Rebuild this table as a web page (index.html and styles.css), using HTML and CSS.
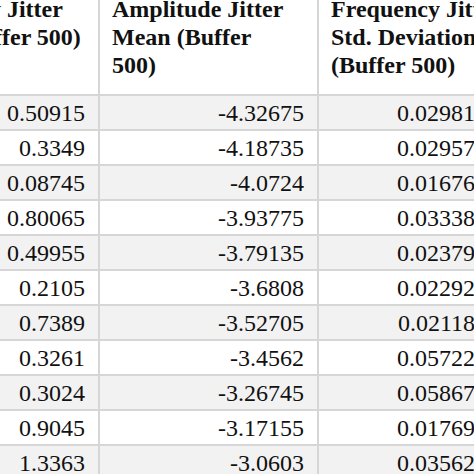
FILE: index.html
```html
<!DOCTYPE html>
<html lang="en">
<head>
<meta charset="utf-8">
<title>Jitter table</title>
<link rel="stylesheet" href="styles.css">
</head>
<body class="page">
<main class="viewport">
<table class="data">
<colgroup>
<col class="c1"><col class="c2"><col class="c3">
</colgroup>
<thead>
<tr class="head">
<th class="hcell">Frequency Jitter<br>Mean (Buffer 500)</th>
<th class="hcell">Amplitude Jitter<br>Mean (Buffer<br>500)</th>
<th class="hcell">Frequency Jitter<br>Std. Deviation<br>(Buffer 500)</th>
</tr>
</thead>
<tbody>
<tr class="row"><td class="num">0.50915</td><td class="num">-4.32675</td><td class="num">0.0298135</td></tr>
<tr class="row"><td class="num">0.3349</td><td class="num">-4.18735</td><td class="num">0.0295744</td></tr>
<tr class="row"><td class="num">0.08745</td><td class="num">-4.0724</td><td class="num">0.0167629</td></tr>
<tr class="row"><td class="num">0.80065</td><td class="num">-3.93775</td><td class="num">0.0333853</td></tr>
<tr class="row"><td class="num">0.49955</td><td class="num">-3.79135</td><td class="num">0.0237961</td></tr>
<tr class="row"><td class="num">0.2105</td><td class="num">-3.6808</td><td class="num">0.0229227</td></tr>
<tr class="row"><td class="num">0.7389</td><td class="num">-3.52705</td><td class="num">0.0211836</td></tr>
<tr class="row"><td class="num">0.3261</td><td class="num">-3.4562</td><td class="num">0.0572218</td></tr>
<tr class="row"><td class="num">0.3024</td><td class="num">-3.26745</td><td class="num">0.0586742</td></tr>
<tr class="row"><td class="num">0.9045</td><td class="num">-3.17155</td><td class="num">0.0176935</td></tr>
<tr class="row"><td class="num">1.3363</td><td class="num">-3.0603</td><td class="num">0.0356241</td></tr>
</tbody>
</table>
</main>
</body>
</html>
```
FILE: styles.css
```css
html, body {
  margin: 0;
  padding: 0;
  background: #ffffff;
}
.page {
  font-family: "Liberation Serif", "Times New Roman", serif;
}
.viewport {
  display: block;
  width: 474px;
  height: 474px;
  overflow: hidden;
}
.data {
  border-collapse: collapse;
  table-layout: fixed;
  width: 634px;
  margin: -21px 0 0 -122px;
  color: #111111;
}
.c1 { width: 220px; }
.c2 { width: 219px; }
.c3 { width: 195px; }
.hcell,
.num {
  border: 2px solid #d6d6d6;
  font-family: "Liberation Serif", "Times New Roman", serif;
  font-size: 24px;
  line-height: 28px;
  white-space: nowrap;
}
.hcell {
  font-weight: bold;
  text-align: left;
  vertical-align: top;
  overflow: hidden;
  padding: 14px 13px 15px 12px;
}
.num {
  font-weight: normal;
  text-align: right;
  padding: 2.5px 13px 2.5px 12px;
}
.row:nth-child(odd) .num {
  background: #f2f2f2;
}
```
